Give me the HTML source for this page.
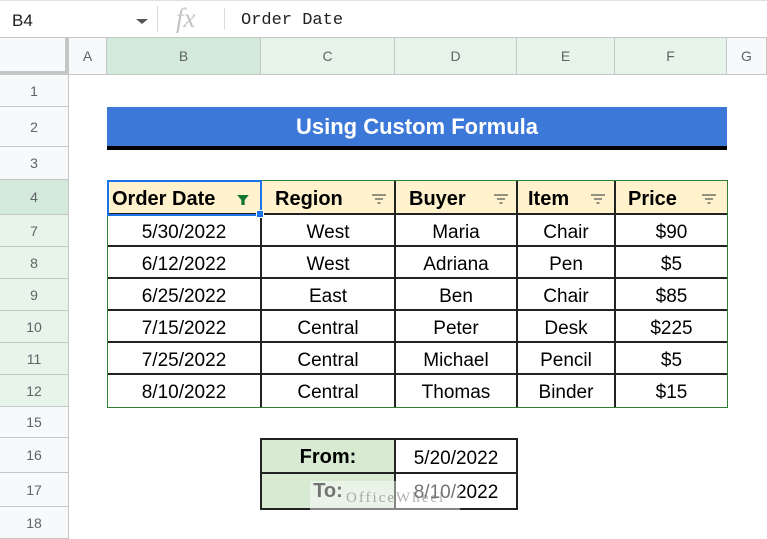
<!DOCTYPE html>
<html><head><meta charset="utf-8"><style>
*{margin:0;padding:0;box-sizing:border-box}
body{width:767px;height:539px;overflow:hidden;background:#fff;font-family:"Liberation Sans",Arial,sans-serif;position:relative}
.a{position:absolute}
.ch{position:absolute;top:38px;height:37px;border-right:1px solid #c4c7c5;border-bottom:1px solid #c4c7c5;color:#5f6368;font-size:14px;text-align:center;line-height:36px}
.rh{position:absolute;left:0;width:69px;border-right:1px solid #c4c7c5;border-bottom:1px solid #c4c7c5;color:#5f6368;font-size:14px;text-align:center;background:#f8f9fa}
.c{position:absolute;text-align:center;font-size:19px;color:#000;border-right:2px solid #222;border-bottom:2px solid #222;line-height:35px}
.h{font-weight:bold;font-size:20px;background:#fff2cc;text-align:left;line-height:36px}
.f{position:absolute;top:13px;width:14px;height:10px}
</style></head><body>
<div class="a" style="left:0;top:0;width:767px;height:38px;border-bottom:1px solid #c4c7c5;border-top:1px solid #e0e0e0"></div>
<div class="a" style="left:12px;top:11px;font-size:17px;color:#202124">B4</div>
<div class="a" style="left:136px;top:19px;border-left:6px solid transparent;border-right:6px solid transparent;border-top:5px solid #555"></div>
<div class="a" style="left:157px;top:6px;width:1px;height:26px;background:#dadce0"></div>
<div class="a" style="left:176px;top:3px;font-size:27px;color:#c4c4c4;font-family:'Liberation Serif',serif;font-style:italic">fx</div>
<div class="a" style="left:224px;top:8px;width:1px;height:22px;background:#dadce0"></div>
<div class="a" style="left:241px;top:11px;font-size:17px;color:#202124;font-family:'Liberation Mono',monospace">Order Date</div>

<div class="a" style="left:0;top:38px;width:69px;height:37px;background:#f8f9fa;border-right:4px solid #c4c7c5;border-bottom:4px solid #c4c7c5"></div>
<div class="ch" style="left:69px;width:38px;background:#f8f9fa">A</div>
<div class="ch" style="left:107px;width:154px;background:#d3e9d9">B</div>
<div class="ch" style="left:261px;width:134px;background:#e6f4ea">C</div>
<div class="ch" style="left:395px;width:122px;background:#e6f4ea">D</div>
<div class="ch" style="left:517px;width:98px;background:#e6f4ea">E</div>
<div class="ch" style="left:615px;width:112px;background:#e6f4ea">F</div>
<div class="ch" style="left:727px;width:40px;background:#f8f9fa">G</div>

<div class="rh" style="top:75px;height:32px;line-height:32px">1</div>
<div class="rh" style="top:107px;height:40px;line-height:40px">2</div>
<div class="rh" style="top:147px;height:33px;line-height:33px">3</div>
<div class="rh" style="top:180px;height:35px;line-height:35px;background:#d3e9d9">4</div>
<div class="rh" style="top:215px;height:32px;line-height:32px;background:#e6f4ea">7</div>
<div class="rh" style="top:247px;height:32px;line-height:32px;background:#e6f4ea">8</div>
<div class="rh" style="top:279px;height:32px;line-height:32px;background:#e6f4ea">9</div>
<div class="rh" style="top:311px;height:32px;line-height:32px;background:#e6f4ea">10</div>
<div class="rh" style="top:343px;height:32px;line-height:32px;background:#e6f4ea">11</div>
<div class="rh" style="top:375px;height:32px;line-height:32px;background:#e6f4ea">12</div>
<div class="rh" style="top:407px;height:31px;line-height:31px">15</div>
<div class="rh" style="top:438px;height:35px;line-height:35px">16</div>
<div class="rh" style="top:473px;height:34px;line-height:34px">17</div>
<div class="rh" style="top:507px;height:32px;line-height:32px">18</div>

<div class="a" style="left:107px;top:107px;width:620px;height:43px;background:#3c78d8;border-bottom:4px solid #000;color:#fff;font-weight:bold;font-size:22px;text-align:center;line-height:40px">Using Custom Formula</div>

<div class="c h" style="left:108px;top:181px;width:154px;height:34px;padding-left:4px">Order Date<svg class="f" style="left:128px;top:14px" viewBox="0 0 14 12"><path d="M0 0H14L9 6V12H5V6Z" fill="#137333"/></svg></div>
<div class="c h" style="left:262px;top:181px;width:134px;height:34px;padding-left:13px">Region<svg class="f" style="left:110px" viewBox="0 0 14 10"><path d="M0 1H14M3 5H11M5.5 9H8.5" stroke="#555" stroke-width="1.3"/></svg></div>
<div class="c h" style="left:396px;top:181px;width:122px;height:34px;padding-left:13px">Buyer<svg class="f" style="left:98px" viewBox="0 0 14 10"><path d="M0 1H14M3 5H11M5.5 9H8.5" stroke="#555" stroke-width="1.3"/></svg></div>
<div class="c h" style="left:518px;top:181px;width:98px;height:34px;padding-left:10px">Item<svg class="f" style="left:73px" viewBox="0 0 14 10"><path d="M0 1H14M3 5H11M5.5 9H8.5" stroke="#555" stroke-width="1.3"/></svg></div>
<div class="c h" style="left:616px;top:181px;width:111px;height:34px;padding-left:12px;border-right:none">Price<svg class="f" style="left:86px" viewBox="0 0 14 10"><path d="M0 1H14M3 5H11M5.5 9H8.5" stroke="#555" stroke-width="1.3"/></svg></div>

<div class="c" style="left:108px;top:215px;width:154px;height:32px">5/30/2022</div><div class="c" style="left:262px;top:215px;width:134px;height:32px">West</div><div class="c" style="left:396px;top:215px;width:122px;height:32px">Maria</div><div class="c" style="left:518px;top:215px;width:98px;height:32px">Chair</div><div class="c" style="left:616px;top:215px;width:111px;height:32px;border-right:none">$90</div>
<div class="c" style="left:108px;top:247px;width:154px;height:32px">6/12/2022</div><div class="c" style="left:262px;top:247px;width:134px;height:32px">West</div><div class="c" style="left:396px;top:247px;width:122px;height:32px">Adriana</div><div class="c" style="left:518px;top:247px;width:98px;height:32px">Pen</div><div class="c" style="left:616px;top:247px;width:111px;height:32px;border-right:none">$5</div>
<div class="c" style="left:108px;top:279px;width:154px;height:32px">6/25/2022</div><div class="c" style="left:262px;top:279px;width:134px;height:32px">East</div><div class="c" style="left:396px;top:279px;width:122px;height:32px">Ben</div><div class="c" style="left:518px;top:279px;width:98px;height:32px">Chair</div><div class="c" style="left:616px;top:279px;width:111px;height:32px;border-right:none">$85</div>
<div class="c" style="left:108px;top:311px;width:154px;height:32px">7/15/2022</div><div class="c" style="left:262px;top:311px;width:134px;height:32px">Central</div><div class="c" style="left:396px;top:311px;width:122px;height:32px">Peter</div><div class="c" style="left:518px;top:311px;width:98px;height:32px">Desk</div><div class="c" style="left:616px;top:311px;width:111px;height:32px;border-right:none">$225</div>
<div class="c" style="left:108px;top:343px;width:154px;height:32px">7/25/2022</div><div class="c" style="left:262px;top:343px;width:134px;height:32px">Central</div><div class="c" style="left:396px;top:343px;width:122px;height:32px">Michael</div><div class="c" style="left:518px;top:343px;width:98px;height:32px">Pencil</div><div class="c" style="left:616px;top:343px;width:111px;height:32px;border-right:none">$5</div>
<div class="c" style="left:108px;top:375px;width:154px;height:32px;border-bottom:none">8/10/2022</div><div class="c" style="left:262px;top:375px;width:134px;height:32px;border-bottom:none">Central</div><div class="c" style="left:396px;top:375px;width:122px;height:32px;border-bottom:none">Thomas</div><div class="c" style="left:518px;top:375px;width:98px;height:32px;border-bottom:none">Binder</div><div class="c" style="left:616px;top:375px;width:111px;height:32px;border:none">$15</div>

<div class="a" style="left:107px;top:180px;width:621px;height:228px;border:1px solid #2e7d32"></div>
<div class="a" style="left:107px;top:180px;width:155px;height:36px;border:2px solid #1a73e8"></div>
<div class="a" style="left:256px;top:210px;width:8px;height:8px;background:#1a73e8;border:1px solid #fff"></div>

<div class="a" style="left:260px;top:438px;width:258px;height:72px;border:2px solid #222"></div>
<div class="c" style="left:262px;top:440px;width:134px;height:34px;background:#d9ead3;font-weight:bold;font-size:20px;line-height:34px">From:</div>
<div class="c" style="left:396px;top:440px;width:120px;height:34px;border-right:none;line-height:38px">5/20/2022</div>
<div class="c" style="left:262px;top:474px;width:134px;height:34px;background:#d9ead3;font-weight:bold;font-size:20px;border-bottom:none;line-height:34px">To:</div>
<div class="c" style="left:396px;top:474px;width:120px;height:34px;border:none;line-height:38px">8/10/2022</div>
<div class="a" style="left:310px;top:481px;width:150px;height:30px;background:rgba(255,255,255,.45)"></div>
<div class="a" style="left:346px;top:490px;font-family:'Liberation Serif',serif;font-size:15px;letter-spacing:2px;color:rgba(120,120,120,.6)">OfficeWheel</div>
</body></html>
